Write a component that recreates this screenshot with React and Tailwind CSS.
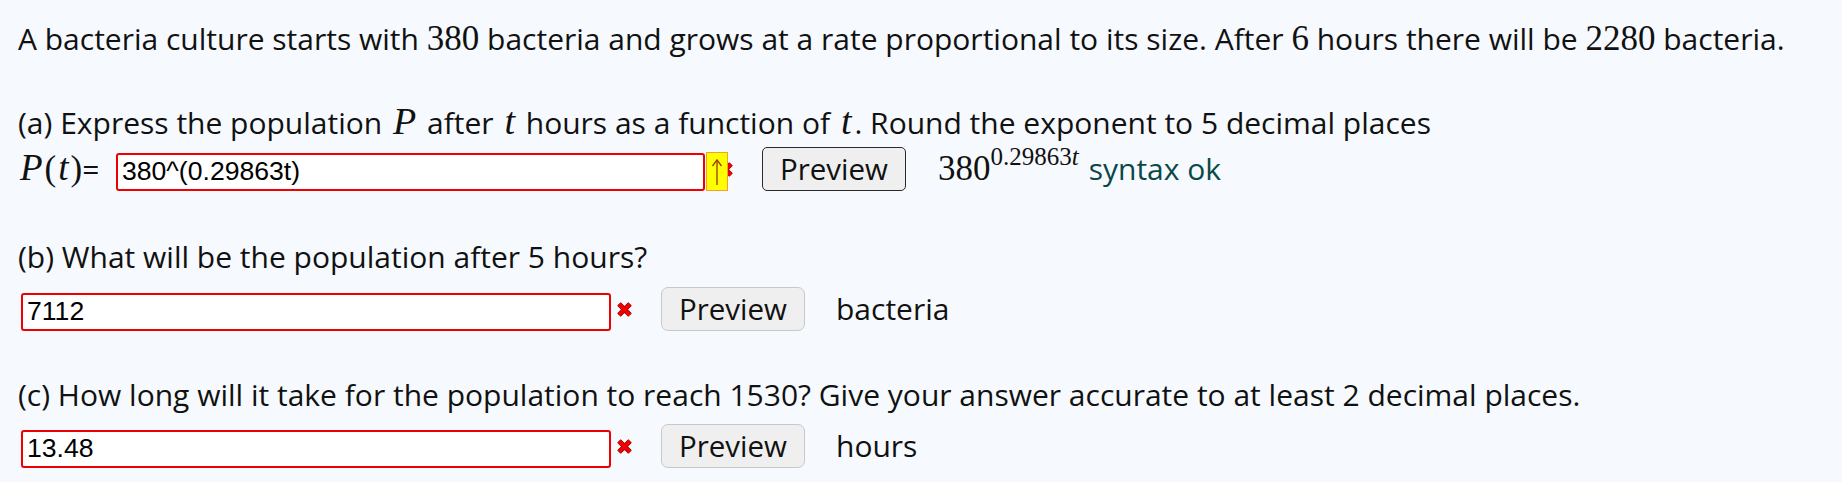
import React from "react";

function M({ children, italic, wide }) {
  if (italic && wide) {
    return (
      <span className="px-[3px] font-['Liberation_Serif',serif] text-[38px] italic leading-none">{children}</span>
    );
  }
  if (italic) {
    return (
      <span className="px-[2px] font-['Liberation_Serif',serif] text-[37px] italic leading-none">{children}</span>
    );
  }
  return <span className="font-['Liberation_Serif',serif] text-[35px] leading-none">{children}</span>;
}

function RedX({ slice }) {
  const path = (
    <g>
      <path d="M2 2 L13 13 M13 2 L2 13" stroke="#8a0000" strokeWidth="5" strokeLinecap="butt" />
      <path d="M2 2 L13 13 M13 2 L2 13" stroke="#f20000" strokeWidth="3.8" strokeLinecap="butt" />
    </g>
  );
  if (slice) {
    return (
      <svg width="5" height="15" viewBox="10 0 5 15" className="block">
        {path}
      </svg>
    );
  }
  return (
    <svg width="15" height="15" viewBox="0 0 15 15" className="block">
      {path}
    </svg>
  );
}

function UpArrow() {
  return (
    <svg width="12" height="28" viewBox="0 0 12 28" className="block">
      <path d="M6 2 L6 27" stroke="#9a3a00" strokeWidth="1.3" fill="none" />
      <path d="M1.5 8 L6 1.8 L10.5 8" stroke="#9a3a00" strokeWidth="1.3" fill="none" strokeLinejoin="round" />
    </svg>
  );
}

export default function App() {
  return (
    <div className="min-h-screen bg-[#f6fafe] pl-[18px] pt-[19px] font-['Open_Sans',sans-serif] text-[30px] text-[#111]">
      <p className="h-10 whitespace-nowrap leading-[40px]">
        A bacteria culture starts with <M>380</M> bacteria and grows at a rate proportional to its size. After{" "}
        <M>6</M> hours there will be <M>2280</M> bacteria.
      </p>

      <p className="mt-[43px] h-10 whitespace-nowrap leading-[40px]">
        (a) Express the population <M italic wide>P</M> after <M italic wide>t</M> hours as a function of{" "}
        <M italic wide>t</M>. Round the exponent to 5 decimal places
      </p>

      <div className="mt-[5px] flex items-baseline">
        <span className="w-[98px] whitespace-nowrap leading-[0px]">
          <M italic>P</M>
          <M>(</M>
          <M italic>t</M>
          <M>)</M>=
        </span>
        <input
          readOnly
          value="380^(0.29863t)"
          className="h-[38px] w-[589px] rounded-[3px] border-2 border-[#ee0000] bg-white px-[4px] font-['Liberation_Sans',sans-serif] text-[26.6px] leading-[30px] text-black outline-none"
        />
        <span className="ml-[1px] flex h-[39px] w-[22px] items-center justify-center self-end border-[1.5px] border-[#f2a12a] bg-[#ffff00]">
          <UpArrow />
        </span>
        <span className="self-center">
          <RedX slice />
        </span>
        <button className="ml-[29px] h-[44px] w-[144px] rounded-[5px] border-[1.5px] border-[#2a2a2a] bg-[#efefef] p-0 font-['Open_Sans',sans-serif] text-[29.5px] leading-[40px] text-[#111]">
          Preview
        </button>
        <span className="ml-[32px] whitespace-nowrap leading-[0px]">
          <M>380</M>
          <span className="align-[15px] font-['Liberation_Serif',serif] text-[25px] leading-[0px]">
            0.29863<i>t</i>
          </span>
        </span>
        <span className="ml-[10px] leading-[40px] text-[#0b4848]">syntax ok</span>
      </div>

      <p className="mt-[46px] h-10 whitespace-nowrap leading-[40px]">(b) What will be the population after 5 hours?</p>

      <div className="mt-[10px] flex items-baseline">
        <input
          readOnly
          value="7112"
          className="ml-[3px] h-[38px] w-[590px] rounded-[3px] border-2 border-[#ee0000] bg-white px-[4px] font-['Liberation_Sans',sans-serif] text-[26.6px] leading-[30px] text-black outline-none"
        />
        <span className="ml-[6px] self-center">
          <RedX />
        </span>
        <button className="ml-[29px] h-[44px] w-[144px] rounded-[7px] border-[1.5px] border-[#c8c8c8] bg-[#efefef] p-0 font-['Open_Sans',sans-serif] text-[29.5px] leading-[40px] text-[#111]">
          Preview
        </button>
        <span className="ml-[31px] leading-[40px]">bacteria</span>
      </div>

      <p className="mt-[44px] h-10 whitespace-nowrap leading-[40px]">
        (c) How long will it take for the population to reach 1530? Give your answer accurate to at least 2 decimal places.
      </p>

      <div className="mt-[9px] flex items-baseline">
        <input
          readOnly
          value="13.48"
          className="ml-[3px] h-[38px] w-[590px] rounded-[3px] border-2 border-[#ee0000] bg-white px-[4px] font-['Liberation_Sans',sans-serif] text-[26.6px] leading-[30px] text-black outline-none"
        />
        <span className="ml-[6px] self-center">
          <RedX />
        </span>
        <button className="ml-[29px] h-[44px] w-[144px] rounded-[7px] border-[1.5px] border-[#c8c8c8] bg-[#efefef] p-0 font-['Open_Sans',sans-serif] text-[29.5px] leading-[40px] text-[#111]">
          Preview
        </button>
        <span className="ml-[31px] leading-[40px]">hours</span>
      </div>
    </div>
  );
}
